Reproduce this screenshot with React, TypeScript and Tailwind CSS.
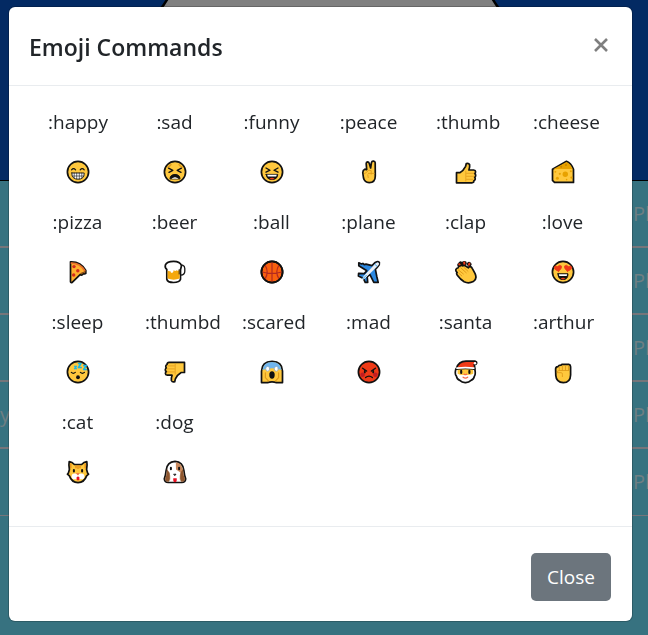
import type { ReactNode } from "react";

const INK = "#111";
const SKIN = "#ffc83d";
const SHADE = "#e09b1b";

function Icon({ label, children }: { label: string; children: ReactNode }) {
  return (
    <svg
      role="img"
      aria-label={label}
      viewBox="0 0 24 24"
      className="size-6 shrink-0"
      fill="none"
      stroke={INK}
      strokeWidth="1.7"
      strokeLinecap="round"
      strokeLinejoin="round"
    >
      {children}
    </svg>
  );
}

const face = <circle cx="12" cy="12" r="10.6" fill={SKIN} />;

const happy = (
  <>
    {face}
    <path d="M5.6 9.8q1.8-2.4 4 0M14.2 9.8q2-2.4 4 0" strokeWidth="1.2" />
    <path d="M5.8 13h12.4q.2 6.2-6.2 6.2T5.8 13Z" fill="#fff" strokeWidth="0.9" />
    <path d="M6.2 16h11.6M8.2 13v5M10.7 13v6M13.3 13v6M15.8 13v5" strokeWidth="0.6" />
  </>
);

const sad = (
  <>
    {face}
    <path d="M4.8 7q2-.6 3.2-2.4M19.2 7q-2-.6-3.2-2.4" stroke={SHADE} strokeWidth="1.4" />
    <path d="m5.6 8.2 4.2 2.2-3.8 2M18.4 8.2l-4.2 2.2 3.8 2" strokeWidth="1.3" />
    <path d="M7 18.5q.2-4 5-4t5 4Z" fill={INK} strokeWidth="1" />
    <path d="M9.6 18.3q2.4-1.6 4.8 0Z" fill="#fff" stroke="#fff" strokeWidth="0.6" />
  </>
);

const funny = (
  <>
    {face}
    <path d="m6 8 4 2.2-4 2M18 8l-4 2.2 4 2" strokeWidth="1.3" />
    <path d="M6.2 14.4h11.6q-.4 5.2-5.8 5.2t-5.8-5.2Z" fill={INK} strokeWidth="0.9" />
    <path d="M7.2 14.8h9.6l-.6 1.6H7.8Z" fill="#fff" stroke="none" />
    <path d="M9.4 18.8q2.6-2.2 5.2 0-2.6 1.2-5.2 0Z" fill="#f03a17" stroke="none" />
  </>
);

const peace = (
  <>
    <path
      d="M9.7 9.6 9.2 3.6q0-1.7 1.3-1.8 1.3 0 1.8 1.6L13.6 8l.9-5.6q.4-1.5 2-1.3t1.7 1.7l.1 13.2q0 6.6-6.1 6.6-4.6-.2-5.7-4.6L5.8 13q-.2-3 2-3.8Z"
      fill={SKIN}
    />
    <path d="M7.3 13.8q2.8-1.4 4.3-3.6l2.6.4v3.6M10.8 14.8l.4 2.8M11.4 13.4h5.8" stroke={SHADE} strokeWidth="0.9" />
  </>
);

const thumbShape =
  "M2.5 12.7h3.3q3.6-2 5.8-6.4l.7-2.8q2.4-.8 3.3 1.2.4 2.4-.7 5.3h4.7q2 .3 2 1.8t-1 1.8q1.3.7 1.1 2t-1 1.7q.8.7.5 1.9t-1.3 1.5q.4 1.9-2.1 2.1H2.5Z";

const thumb = (
  <>
    <path d={thumbShape} fill={SKIN} />
    <path d="M12.6 13.3h7.2M12.6 16.3h7.2M12.6 19.3h6.2M11.8 11.2v9.8" stroke={SHADE} strokeWidth="0.8" />
  </>
);

const thumbDown = (
  <g transform="rotate(180 12 12.6)">
    <path d={thumbShape} fill={SKIN} />
    <path d="M12.6 13.3h7.2M12.6 16.3h7.2M12.6 19.3h6.2M11.8 11.2v9.8" stroke={SHADE} strokeWidth="0.8" />
  </g>
);

const cheese = (
  <>
    <path d="M1.5 9.2 15.5 1.3q4.6 1.9 7 7.9v13.2h-19l-2-2Z" fill={SKIN} />
    <path d="M2.6 8.9 15.5 2q4.2 2 6 6.9Z" fill="#e8a200" stroke="none" />
    <circle cx="10.2" cy="6.8" r="1" fill="#c98500" stroke="none" />
    <circle cx="15" cy="5" r="1" fill="#c98500" stroke="none" />
    <g fill="#e8a200" stroke="none">
      <circle cx="14.3" cy="14.3" r="2.7" />
      <circle cx="6.4" cy="18.2" r="1.5" />
      <circle cx="8.8" cy="13.8" r="1.1" />
      <circle cx="4.4" cy="11.8" r="0.9" />
      <circle cx="19.8" cy="11.2" r="1" />
      <circle cx="20.4" cy="17.6" r="1.1" />
      <circle cx="15.6" cy="19.6" r="0.8" />
    </g>
  </>
);

const pizza = (
  <>
    <path d="M4.5 1.8q10.3-.4 15.3 8.6v3q-1.3 1.2-2.2 0l-1.2 1.4q-1.4.8-2-.4L6.2 22.4q-1.5.6-1.7-.8Z" fill="#ffb02e" />
    <path d="M5.4 3.2q8.6-.2 13.4 7.6" stroke="#e8702a" strokeWidth="1.7" />
    <path d="M15.2 13.4q2-.6 3.8-1.5" stroke="#8a4b18" strokeWidth="1.2" />
    <g fill="#d32b1e" stroke="none">
      <circle cx="8" cy="6.6" r="1.7" />
      <circle cx="11.8" cy="10.8" r="1.7" />
      <circle cx="7.7" cy="15" r="1.7" />
    </g>
  </>
);

const beer = (
  <>
    <path d="M17 5.2h2.6q2.2.8 2.2 3.4v2.6q0 3.6-4 4" strokeWidth="1.3" />
    <path d="M3.8 9.4Q1.6 7.6 2.4 4.9 4 1.5 10.5 1.4t8 4.3l-1 4v9.6q-1 3.2-7 3.2t-6.7-3.2Z" fill="#fff" />
    <path d="M4.6 10.2q1.4 1.8 2.6.8.6 2 1.8 2.1 1.4-.3 1.8-3 1.4 1.8 2.6.2 1.5 1.2 3.3-.9v9.2q-6 2.3-12.1 0Z" fill="#f5a80c" stroke="none" />
    <path d="M16.2 9.6v4.4" strokeWidth="0.9" />
  </>
);

const ball = (
  <>
    <circle cx="12" cy="12" r="10.6" fill="#f9600e" />
    <path d="M12 2v20M2 12q10 2.8 20 0M5 5q4.4 7 0 14M19 5q-4.4 7 0 14" stroke="#b32a20" strokeWidth="1.2" />
    <circle cx="12" cy="12" r="10.6" />
  </>
);

const plane = (
  <>
    <path
      d="M1.8 2.8 4.6 4l1.3-.6 1.3 1.2L9 4.2l6 1.4 3.2-3.2q3.4-1.6 4.2.3.4 2-1.4 3.8l-2.6 2.8 1.4 7.2 1.4 5.9h-4.4l-4-8-2.6 2.4.5 5.6H8.2l-1.8-4-5-2.4.2-2.6 5.6.2 2.6-2.8-8-5Z"
      fill="#2b88e0"
    />
    <path d="m5.2 19.7 1.8-3.5L18.8 3.6q2.2-1.3 2.7-.5.7.9-.7 2.5L8.2 17.8Z" fill="#eceff3" stroke="#eceff3" strokeWidth="0.8" />
    <path d="m18.4 4.8 1.3 1.2M6 18.7l3.4-3.4" stroke="#30a9f3" strokeWidth="1" />
  </>
);

const clap = (
  <>
    <path d="m5.4 5 1.2-1.3M10 3.2h.6M15 4l.4.4" strokeWidth="4.4" />
    <path d="m5.3 4.2.8 1.2M10.2 2.6l.2 1.5M15.4 3.6l-.4 1.2" stroke="#f03a17" strokeWidth="2" />
    <path
      d="M1.9 9.6Q2.4 8 4 8q.2-1.8 2-2 1.3-1 2.6-.1 1.6-.9 3 .1l2.8 1.8q.6-1.6 2-1.2 1.2.4 2 2l2.7 5q2.4 5.4-1.8 8-4.8 2.4-9.2.2-3.6-2.3-6.8-6.6-1.2-1.6-.2-2.8-1.6-1.2-1.2-2.8Z"
      fill={SKIN}
    />
    <path d="m4.4 10 5 4M6.8 7.8l5.5 5M10 7.4l4 3.9M4.8 13.2l3 2.7" stroke={SHADE} strokeWidth="1" />
  </>
);

const heart = "M0 5.8Q-4.6 2.7-3.7.8-2.2-1.3 0 .8 2.2-1.3 3.7.8 4.6 2.7 0 5.8Z";

const love = (
  <>
    {face}
    <g fill="#f03a17" stroke="#f03a17" strokeWidth="0.6">
      <path d={heart} transform="translate(6.6 5.8) rotate(-10)" />
      <path d={heart} transform="translate(17.4 5.8) rotate(10)" />
    </g>
    <path d="M7 13.8h10q0 5.8-5 5.8t-5-5.8Z" fill={INK} strokeWidth="1" />
    <path d="M7.8 14.3h8.4l-.5 1.8H8.3Z" fill="#fff" stroke="none" />
    <path d="M9.6 18.8q2.4-2 4.8 0-2.4 1.2-4.8 0Z" fill="#f03a17" stroke="none" />
  </>
);

const sleep = (
  <>
    {face}
    <path d="M5.3 12.4q2 1.8 4 0M14.4 12.4q2 1.8 4 0" strokeWidth="1.2" />
    <ellipse cx="12" cy="17.3" rx="1.9" ry="2" fill={INK} stroke="none" />
    <g fill="#15b5ea" stroke="#15b5ea" strokeWidth="0.5" className="font-['Open_Sans',sans-serif] font-bold">
      <text x="8" y="9.2" fontSize="6">z</text>
      <text x="11.8" y="7.6" fontSize="8">z</text>
      <text x="17" y="9.8" fontSize="8">z</text>
    </g>
  </>
);

const scared = (
  <>
    <path d="M1.5 22.6V11q.4-9.6 10.5-9.7T22.5 11v11.6h-6q-4.5-1.6-9 0Z" fill={SKIN} />
    <path d="M2.4 10Q3.5 2.1 12 2.1t9.6 7.9q-4.6-1.8-9.6-1.8T2.4 10Z" fill="#6fb5ee" stroke="none" />
    <ellipse cx="7.7" cy="8.8" rx="2" ry="2.4" fill="#fff" stroke="#8fa6b8" strokeWidth="0.7" />
    <ellipse cx="16.3" cy="8.8" rx="2" ry="2.4" fill="#fff" stroke="#8fa6b8" strokeWidth="0.7" />
    <ellipse cx="12" cy="15" rx="2.7" ry="3.7" fill={INK} stroke="none" />
    <path d="M5.4 12.8v4.8l3 3.2M18.6 12.8v4.8l-3 3.2" stroke={SHADE} strokeWidth="1.2" />
  </>
);

const mad = (
  <>
    <circle cx="12" cy="12" r="10.6" fill="#f03a17" />
    <circle cx="5.6" cy="14.8" r="2.3" fill="#c01d22" stroke="none" />
    <circle cx="18.4" cy="14.8" r="2.3" fill="#c01d22" stroke="none" />
    <path d="m5.6 8.2 4 2.8M18.4 8.2l-4 2.8" strokeWidth="1.4" />
    <path d="M7.8 10.8v1.6M16.2 10.8v1.6" strokeWidth="1.8" />
    <path d="M8.6 17.6q3.4-2.8 6.8 0" strokeWidth="1.3" />
  </>
);

const santa = (
  <>
    <path d="M1.8 9.2q-1.3 5 .6 7 .6 3.4 3.4 4.2 2.2 2.3 5.6 2.2 3.4.1 5.6-2.2 2.8-.8 3.4-4.2 1.5-2 .4-7Z" fill="#fff" />
    <path d="M2.4 8.4Q4.5 1.4 12 1.2h9.3q1.6.4 1.3 2.2-.8 1.5-2.3.9l.6 4.6Z" fill="#f03a17" />
    <circle cx="21" cy="3.2" r="1.2" fill="#fff" stroke="none" />
    <path d="M3 8.2q8.4-1.2 16.8 0" stroke="#fff" strokeWidth="1.8" />
    <path d="M3.6 9.8q7.8-1 15.6 0v4q-3 1.7-7.8 1.2-4.8.5-7.8-1.2Z" fill={SKIN} stroke="none" />
    <path d="M7.2 10.9v2M15.4 10.9v2" strokeWidth="2.1" />
    <path d="M10.2 14.2q1.2.9 2.4 0M9.1 17.2q2.3 1.8 4.6 0" stroke="#f26a4a" strokeWidth="1.2" />
  </>
);

const fist = (
  <>
    <path d="M4.6 9.2q0-2.3 2.2-2.5 1-1.5 3-1.5l1.4-.9h6.6q1.8.4 1.8 2.4v8.2q-.2 7.5-7.3 7.7-7-.4-7.5-7Z" fill={SKIN} />
    <path
      d="M6.2 12.6q-.2-2 1.8-2.1h9.6M8.3 6.8v3.4M11.4 6.2v4M14.5 6.2v4M17.5 6.2v4M6.4 12.7h3.8q1.4.2 1.2 1.6v2.3"
      stroke={SHADE}
      strokeWidth="0.9"
    />
  </>
);

const cat = (
  <>
    <path
      d="M3.2 1.7q3 .4 5.2 2.8h7.2q2.2-2.4 5.2-2.8.7 3.6-.2 7.8l1 3.4 1 1.3-2 1.7q-2.3 6.6-8.6 6.8-6.3-.2-8.6-6.8l-2-1.7 1-1.3 1-3.4q-.9-4.2-.2-7.8Z"
      fill={SKIN}
    />
    <path d="M4.8 4v3.8M19.2 4v3.8M10 5.8v2M14 5.8v2M12 5.6v2.8" stroke="#e48a18" strokeWidth="1.3" />
    <path d="M7.9 9.9v1.6M16.1 9.9v1.6" strokeWidth="2" />
    <ellipse cx="8.8" cy="16.4" rx="3.2" ry="2.9" fill="#fff" stroke="none" />
    <ellipse cx="15.2" cy="16.4" rx="3.2" ry="2.9" fill="#fff" stroke="none" />
    <path d="M11 13.5h2l-1 1.2Z" fill="#e9724c" stroke="#e9724c" strokeWidth="0.8" />
    <path d="M10.6 17.2q1.4-1.2 2.8 0 .3 3.2-1.4 3.4-1.7-.2-1.4-3.4Z" fill="#e81224" stroke="none" />
  </>
);

const dog = (
  <>
    <path
      d="M12 1.3q8 .3 8.9 9.2.6 5.6 1.8 8.4-.5 3.6-3.8 3.6H5.1q-3.3 0-3.8-3.6 1.2-2.8 1.8-8.4Q4 1.6 12 1.3Z"
      fill="#fff"
    />
    <path d="M12.8 2.2q6.3.7 7.2 8.4l-1.8 2.4-5.2-3.6Z" fill="#c98a5e" stroke="none" />
    <path d="M4.2 9.8q2.6 2.6 2.6 6 .6 4-1 5.6-3.4.9-3.6-2.4 1.6-4 2-9.2ZM19.8 9.8q-2.6 2.6-2.6 6-.6 4 1 5.6 3.4.9 3.6-2.4-1.6-4-2-9.2Z" fill="#8e562e" stroke="#8e562e" strokeWidth="0.5" />
    <path d="M7.9 7.8v1.4M16.1 7.8v1.4" strokeWidth="2" />
    <path d="M11 14.2h2l-1 1.2Z" fill={INK} strokeWidth="0.8" />
    <path d="M10.3 18.2h3.4q.5 3.8-1.7 4-2.2-.2-1.7-4Z" fill="#e81224" stroke="none" />
  </>
);

const commands: { name: string; art: ReactNode }[] = [
  { name: ":happy", art: happy },
  { name: ":sad", art: sad },
  { name: ":funny", art: funny },
  { name: ":peace", art: peace },
  { name: ":thumb", art: thumb },
  { name: ":cheese", art: cheese },
  { name: ":pizza", art: pizza },
  { name: ":beer", art: beer },
  { name: ":ball", art: ball },
  { name: ":plane", art: plane },
  { name: ":clap", art: clap },
  { name: ":love", art: love },
  { name: ":sleep", art: sleep },
  { name: ":thumbd", art: thumbDown },
  { name: ":scared", art: scared },
  { name: ":mad", art: mad },
  { name: ":santa", art: santa },
  { name: ":arthur", art: fist },
  { name: ":cat", art: cat },
  { name: ":dog", art: dog },
];

const rows = ["", "", "", "y", ""];

function Backdrop() {
  return (
    <div aria-hidden="true" className="flex h-full flex-col overflow-hidden bg-[#377280]">
      <div className="flex h-[181px] shrink-0 justify-center border-b border-black bg-[#032a63] pl-3">
        <svg viewBox="0 0 340 60" className="h-[60px] w-[340px]">
          <path d="M-4 14 Q4 6 9 -4 H331 Q336 6 344 14 V60 H-4Z" fill="#808080" stroke="#000" strokeWidth="2.5" />
        </svg>
      </div>
      {rows.map((left, i) => (
        <div
          key={i}
          className="flex h-[67px] shrink-0 items-center justify-between overflow-hidden border-b-2 border-[#76757a] text-xl text-[#6f7f83] last:border-b"
        >
          <span className="w-2">{left}</span>
          <span className="w-[15px]">Pl</span>
        </div>
      ))}
    </div>
  );
}

export default function App() {
  return (
    <div className="h-screen font-['Open_Sans','Noto_Sans',sans-serif] text-[#212529]">
      <Backdrop />
      <div className="fixed inset-0 overflow-auto pt-[7px] pr-4 pl-[9px]">
        <div role="dialog" aria-modal="true" aria-labelledby="emoji-title" className="rounded-md bg-white shadow-[0_0_0_1px_rgba(0,0,0,0.2)]">
          <header className="flex items-start justify-between border-b border-[#e9ecef] px-5 pt-[21px] pb-[19px]">
            <h5 id="emoji-title" className="text-[23px] leading-[38px] font-semibold">
              Emoji Commands
            </h5>
            <button type="button" aria-label="Close dialog" className="mt-1.5 flex size-[22px] items-center justify-center text-[#7f7f7f]">
              <svg viewBox="0 0 14 14" className="size-3.5" fill="none" stroke="currentColor" strokeWidth="2.6">
                <path d="m1 1 12 12M13 1 1 13" />
              </svg>
            </button>
          </header>
          <ul className="grid grid-cols-6 pt-[21px] pr-[21px] pb-[19px] pl-5">
            {commands.map(({ name, art }) => (
              <li key={name} className="flex h-[100px] flex-col items-center px-[19px]">
                <div className="flex w-full">
                  <span className="mx-auto text-[19px] leading-[30px] whitespace-nowrap">{name}</span>
                </div>
                <div className="mt-[23px]">
                  <Icon label={name.slice(1)}>{art}</Icon>
                </div>
              </li>
            ))}
          </ul>
          <footer className="flex justify-end border-t border-[#e9ecef] pt-[26px] pr-[21px] pb-5 pl-5">
            <button type="button" className="h-12 rounded-[5px] bg-[#6c757d] px-4 text-[19px] text-white">
              Close
            </button>
          </footer>
        </div>
      </div>
    </div>
  );
}
